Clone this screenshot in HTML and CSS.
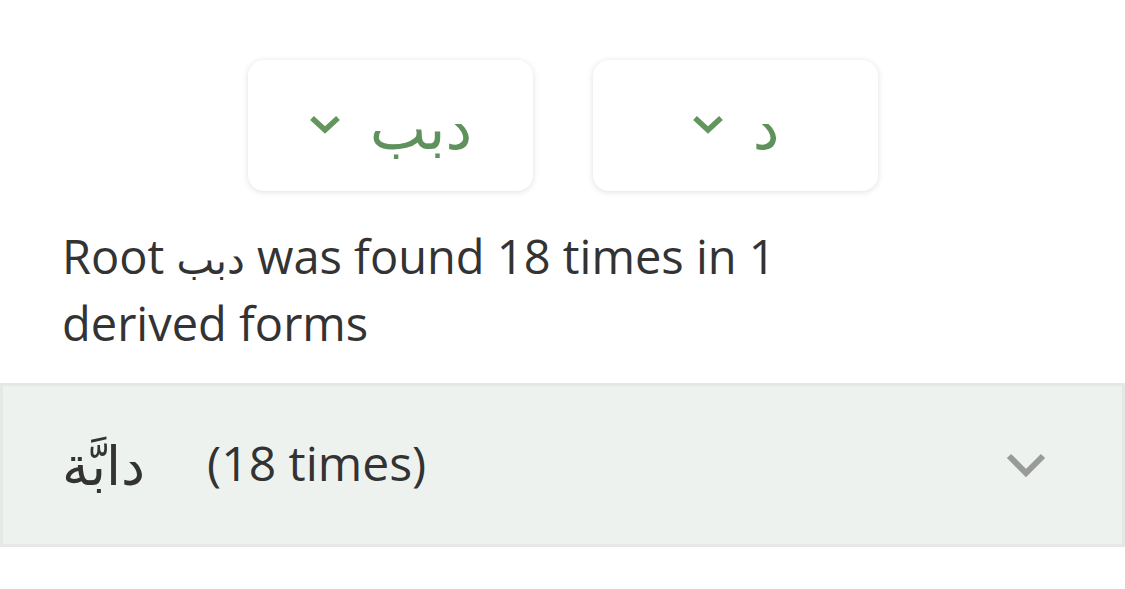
FILE: index.html
```html
<!DOCTYPE html>
<html lang="en">
<head>
    <meta charset="UTF-8">
    <meta name="viewport" content="width=device-width, initial-scale=1.0">
    <title>Root Search</title>
    <link rel="stylesheet" href="styles.css">
</head>
<body>

<div class="page">
    <!-- Root and letter pickers -->
    <div class="pickers">
        <div class="picker">
            <span class="picker-value" dir="rtl">دبب</span>
            <svg class="picker-arrow" viewBox="0 0 34 20" width="34" height="20">
                <path d="M4 4 L17 16 L30 4" fill="none" stroke="#63955f" stroke-width="5.5"/>
            </svg>
        </div>
        <div class="picker">
            <span class="picker-value" dir="rtl">د</span>
            <svg class="picker-arrow" viewBox="0 0 34 20" width="34" height="20">
                <path d="M4 4 L17 16 L30 4" fill="none" stroke="#63955f" stroke-width="5.5"/>
            </svg>
        </div>
    </div>

    <p class="summary">Root <span class="ar">دبب</span> was found 18 times in 1 derived forms</p>
</div>

<!-- Derived forms -->
<div class="form-row">
    <span class="form-word" dir="rtl">دابَّة</span>
    <span class="form-count">(18 times)</span>
    <svg class="form-arrow" viewBox="0 0 40 26" width="40" height="26">
        <path d="M3 4 L20 21 L37 4" fill="none" stroke="#9a9a9a" stroke-width="6"/>
    </svg>
</div>

</body>
</html>
```

FILE: styles.css
```css
body {
    margin: 0;
    font-family: "Open Sans", "DejaVu Sans", sans-serif;
    color: #333;
    background: #fff;
}
.page {
    padding: 60px 62px 0;
}
.pickers {
    display: flex;
    justify-content: center;
    gap: 60px;
}
.picker {
    width: 285px;
    height: 131px;
    box-sizing: border-box;
    background: #fff;
    border-radius: 16px;
    box-shadow: 0 1px 6px rgba(0, 0, 0, 0.13);
    display: flex;
    flex-direction: row-reverse;
    align-items: center;
    justify-content: center;
    gap: 28px;
}
.picker-value {
    font-family: "DejaVu Sans", sans-serif;
    font-size: 60px;
    color: #5e915b;
    line-height: 1;
    padding-top: 4px;
}
.picker-arrow {
    display: block;
    margin-top: -4px;
}
.summary {
    margin: 34px 0 0;
    font-size: 47px;
    line-height: 63px;
    max-width: 800px;
}
.ar {
    font-family: "DejaVu Sans", sans-serif;
    font-size: 40px;
}
.form-row {
    margin-top: 28px;
    height: 164px;
    box-sizing: border-box;
    border: 3px solid #e6e8e6;
    background: #eef2ef;
    display: flex;
    align-items: center;
    padding: 0 76px 0 59px;
}
.form-word {
    font-family: "DejaVu Sans", sans-serif;
    font-size: 54px;
    margin-top: 2px;
}
.form-count {
    font-size: 48px;
    margin-left: 62px;
    margin-top: -6px;
}
.form-arrow {
    margin-left: auto;
    display: block;
}
```
